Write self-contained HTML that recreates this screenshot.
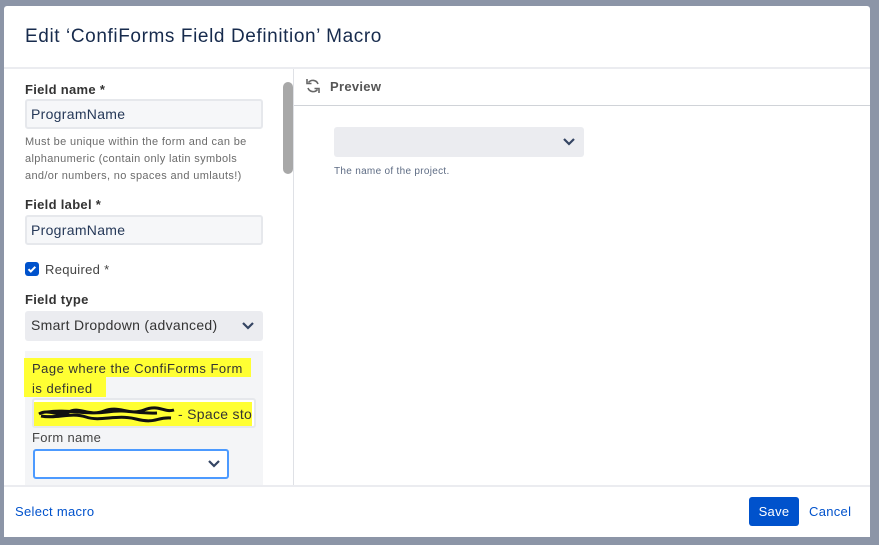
<!DOCTYPE html>
<html><head><meta charset="utf-8">
<style>
*{box-sizing:border-box;margin:0;padding:0}
body{width:879px;height:545px;background:#8c95a7;font-family:"Liberation Sans",sans-serif;position:relative;overflow:hidden;letter-spacing:0.3px}
.dlg{position:absolute;left:4px;top:6px;width:866px;height:531px;background:#fff;border-radius:3px}
.a{position:absolute}
.lbl{font-size:13px;font-weight:bold;color:#333}
.inp{position:absolute;background:#f6f7f9;border:2px solid #e6e8ec;border-radius:3px;font-size:14px;color:#253858;padding:5px 4px}
.help{font-size:11px;color:#6b6b6b;line-height:17px;letter-spacing:0.35px}
.sel{position:absolute;background:#ebecf0;border-radius:3px;font-size:14px;color:#333;padding:6px 6px}
.chev{position:absolute;right:8px;top:10px}
</style></head><body>
<div class="dlg">
 <div class="a" style="left:21px;top:20px;font-size:19px;color:#172b4d;letter-spacing:0.6px">Edit ‘ConfiForms Field Definition’ Macro</div>
 <div class="a" style="left:0;top:61px;width:866px;height:2px;background:#ebecf0"></div>
 <div class="a" style="left:289px;top:63px;width:1px;height:417px;background:#dfe1e6"></div>
 <div class="a" style="left:279px;top:76px;width:10px;height:92px;background:#a8a8a8;border-radius:5px"></div>
 <div class="a lbl" style="left:21px;top:76px">Field name *</div>
 <div class="inp" style="left:21px;top:93px;width:238px;height:30px">ProgramName</div>
 <div class="a help" style="left:21px;top:128px;width:236px">Must be unique within the form and can be alphanumeric (contain only latin symbols and/or numbers, no spaces and umlauts!)</div>
 <div class="a lbl" style="left:21px;top:191px">Field label *</div>
 <div class="inp" style="left:21px;top:209px;width:238px;height:30px">ProgramName</div>
 <div class="a" style="left:21px;top:256px;width:14px;height:14px;background:#0052cc;border-radius:3px"><svg width="14" height="14"><path d="M3.5 7.2l2.3 2.3 4.5-4.7" stroke="#fff" stroke-width="2" fill="none"/></svg></div>
 <div class="a" style="left:41px;top:256px;font-size:13px;color:#444">Required *</div>
 <div class="a lbl" style="left:21px;top:286px">Field type</div>
 <div class="sel" style="left:21px;top:305px;width:238px;height:30px">Smart Dropdown (advanced)<svg class="chev" width="14" height="10"><path d="M2 2l5 5 5-5" stroke="#344563" stroke-width="2.2" fill="none"/></svg></div>
 <div class="a" style="left:21px;top:345px;width:238px;height:135px;background:#f4f5f7"></div>
 <div class="a" style="left:20px;top:352px;width:227px;height:19px;background:#ffff33"></div>
 <div class="a" style="left:20px;top:371px;width:82px;height:20px;background:#ffff33"></div>
 <div class="a" style="left:28px;top:353px;font-size:13px;color:#333;line-height:20px;letter-spacing:0.5px">Page where the ConfiForms Form<br>is defined</div>
 <div class="a" style="left:28px;top:392px;width:224px;height:30px;background:#fff;border:2px solid #e6e8ec;border-radius:3px"></div>
 <div class="a" style="left:30px;top:396px;width:218px;height:24px;background:#ffff33"></div>
 <svg class="a" style="left:33px;top:400px" width="140" height="18"><path d="M2 8c10-6 20 4 30-2s20 5 35-1 25 5 40-1 20 3 30 0M4 10c15 3 30-4 45 1s30-3 50 2 20-2 35-1M10 6c20-3 40 3 60 0s30 2 50 1" stroke="#111" stroke-width="3" fill="none"/></svg>
 <div class="a" style="left:174px;top:400px;font-size:14px;color:#333">- Space sto</div>
 <div class="a" style="left:28px;top:424px;font-size:13px;color:#444">Form name</div>
 <div class="a" style="left:29px;top:443px;width:196px;height:30px;background:#fff;border:2px solid #4c9aff;border-radius:3px"><svg class="a" style="right:6px;top:8px" width="14" height="10"><path d="M2 2l5 5 5-5" stroke="#344563" stroke-width="2.2" fill="none"/></svg></div>
 <svg class="a" style="left:301px;top:72px" width="16" height="16"><path d="M13 6A5.5 5.5 0 0 0 3.5 4.5M3 10a5.5 5.5 0 0 0 9.5 1.5" stroke="#666" stroke-width="1.6" fill="none"/><path d="M2 1v4.5h4.5M14 15v-4.5H9.5" stroke="#666" stroke-width="1.6" fill="none"/></svg>
 <div class="a" style="left:326px;top:73px;font-size:13px;font-weight:bold;color:#555">Preview</div>
 <div class="a" style="left:290px;top:99px;width:576px;height:1px;background:#d0d3d8"></div>
 <div class="a" style="left:330px;top:121px;width:250px;height:30px;background:#ebecf0;border-radius:3px"><svg class="a" style="right:8px;top:10px" width="14" height="10"><path d="M2 2l5 5 5-5" stroke="#344563" stroke-width="2.2" fill="none"/></svg></div>
 <div class="a" style="left:330px;top:160px;font-size:10px;color:#5e6c84">The name of the project.</div>
 <div class="a" style="left:0;top:479px;width:866px;height:52px;background:#fff;border-top:2px solid #ebecf0"></div>
 <div class="a" style="left:11px;top:498px;font-size:13px;color:#0052cc">Select macro</div>
 <div class="a" style="left:745px;top:491px;width:50px;height:29px;background:#0052cc;border-radius:3px;color:#fff;font-size:13px;text-align:center;line-height:29px">Save</div>
 <div class="a" style="left:805px;top:498px;font-size:13px;color:#0052cc">Cancel</div>
</div>
</body></html>
